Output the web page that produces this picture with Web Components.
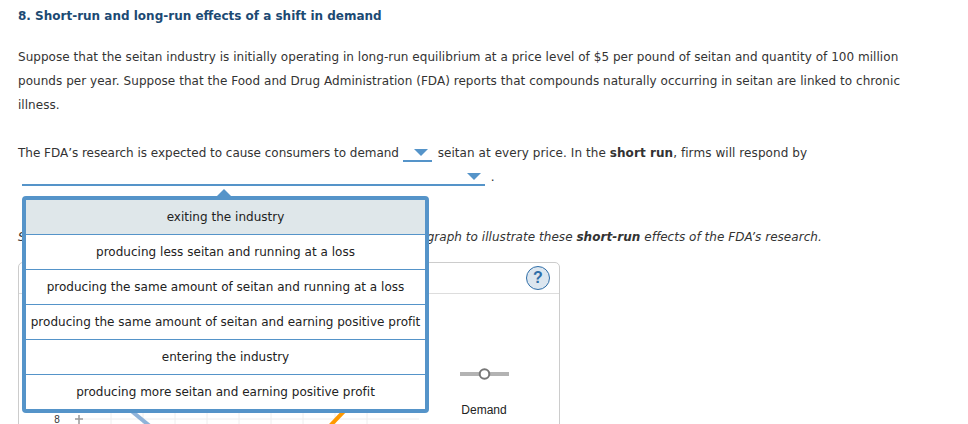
<!DOCTYPE html>
<html>
<head>
<meta charset="utf-8">
<style>
html, body { margin: 0; height: 424px; overflow: hidden; background: #fff; }
body { font: 12px "DejaVu Sans", Verdana, sans-serif; color: #333; }
.gap { display: inline-block; width: 401px; }
.tight { letter-spacing: -.02px; }
.loose { letter-spacing: .07px; }
</style>
</head>
<body>
<question-page>
  <q-heading>8. Short-run and long-run effects of a shift in demand</q-heading>
  <q-para>Suppose that the seitan industry is initially operating in long-run equilibrium at a price level of $5 per pound of seitan and quantity of 100 million pounds per year. Suppose that the Food and Drug Administration (FDA) reports that compounds naturally occurring in seitan are linked to chronic illness.</q-para>
  <q-para class="second"><span class="tight">The FDA’s research is expected to cause consumers to demand </span><q-drop style="--w:29px"></q-drop><span class="loose"> seitan at every price. In the <b>short run</b>, firms will respond by</span><br><q-drop style="--w:463px" class="long"></q-drop> .</q-para>
  <q-para class="third"><i>S<span class="gap"></span>graph to illustrate these <b>short-run</b> effects of the FDA’s research.</i></q-para>
  <graph-card></graph-card>
  <drop-menu>
    <menu-row active>exiting the industry</menu-row>
    <menu-row>producing less seitan and running at a loss</menu-row>
    <menu-row>producing the same amount of seitan and running at a loss</menu-row>
    <menu-row>producing the same amount of seitan and earning positive profit</menu-row>
    <menu-row>entering the industry</menu-row>
    <menu-row>producing more seitan and earning positive profit</menu-row>
  </drop-menu>
</question-page>

<script>
class QuestionPage extends HTMLElement {
    constructor() {
        super()
        this.attachShadow({ mode: 'open' })
        this.shadowRoot.innerHTML = `
        <style>
            :host { display: block; position: relative; height: 424px; padding: 8px 0 0 18px; box-sizing: border-box; overflow: hidden; }
        </style>
        <slot></slot>`
    }
}

class QHeading extends HTMLElement {
    constructor() {
        super()
        this.attachShadow({ mode: 'open' })
        this.shadowRoot.innerHTML = `
        <style>
            :host { display: block; font-weight: bold; line-height: 16px; color: #1c4a73; margin-bottom: 21px; }
        </style>
        <slot></slot>`
    }
}

class QPara extends HTMLElement {
    constructor() {
        super()
        this.attachShadow({ mode: 'open' })
        this.shadowRoot.innerHTML = `
        <style>
            :host { display: block; width: 900px; line-height: 24px; letter-spacing: .04px; margin-bottom: 24px; }
            :host(.second) { margin-bottom: 36px; }
            :host(.third) { margin-bottom: 13px; }
        </style>
        <slot></slot>`
    }
}

class QDrop extends HTMLElement {
    constructor() {
        super()
        this.attachShadow({ mode: 'open' })
        this.shadowRoot.innerHTML = `
        <style>
            :host { display: inline-block; overflow: hidden; box-sizing: border-box; width: var(--w); height: 16px; padding: 3px 4px 0 0; border-bottom: 2px solid #5594c9; vertical-align: -5px; margin: 0 2px 0 0; }
            :host(.long) { margin-left: 4px; }
            svg { display: block; margin-left: auto; }
        </style>
        <svg width="14" height="7" viewBox="0 0 14 7"><path d="M0 0H14L7 7Z" fill="#5594c9"/></svg>`
    }
}

class DropMenu extends HTMLElement {
    constructor() {
        super()
        this.attachShadow({ mode: 'open' })
        this.shadowRoot.innerHTML = `
        <style>
            :host { display: block; position: absolute; left: 22px; top: 196px; width: 407px; box-sizing: border-box; border: 4px solid #5594c9; border-radius: 4px; background: #fff; }
            .tip { position: absolute; left: 191px; top: -11px; width: 0; height: 0; border: 7.5px solid transparent; border-top: 0; border-bottom-color: #5594c9; }
        </style>
        <div class="tip"></div>
        <slot></slot>`
    }
}

class MenuRow extends HTMLElement {
    constructor() {
        super()
        this.attachShadow({ mode: 'open' })
        this.shadowRoot.innerHTML = `
        <style>
            :host { display: flex; align-items: center; justify-content: center; height: 35px; box-sizing: border-box; border-top: 1px solid #5594c9; color: #222; letter-spacing: .02px; white-space: nowrap; }
            :host(:first-child) { height: 34px; border-top: 0; }
            :host([active]) { background: #dfe7ea; }
        </style>
        <slot></slot>`
    }
}

class HelpIcon extends HTMLElement {
    constructor() {
        super()
        this.attachShadow({ mode: 'open' })
        this.shadowRoot.innerHTML = `
        <style>
            :host { display: block; width: 24px; height: 24px; box-sizing: border-box; border: 1.5px solid #2f6ea8; border-radius: 50%; background: #dce6ef; color: #2f6ea8; font: bold 16px/21px "Liberation Sans", sans-serif; text-align: center; }
        </style>
        ?`
    }
}

class GraphCard extends HTMLElement {
    constructor() {
        super()
        this.attachShadow({ mode: 'open' })
        this.shadowRoot.innerHTML = `
        <style>
            :host { display: block; width: 542px; height: 200px; box-sizing: border-box; border: 1px solid #ccc; border-radius: 5px 5px 0 0; }
            .head { display: flex; justify-content: flex-end; align-items: center; height: 31px; box-sizing: border-box; padding-right: 9px; border-bottom: 1px solid #ddd; }
            .body { display: flex; }
            .plot { width: 400px; flex: none; }
            .legend { flex: 1; display: flex; flex-direction: column; align-items: center; padding-top: 73px; margin-left: -10px; font: 12px "Liberation Sans", sans-serif; color: #222; }
            .legend span { margin-top: 22px; }
            svg { display: block; }
        </style>
        <div class="head"><help-icon></help-icon></div>
        <div class="body">
            <div class="plot">
                <svg width="400" height="140" viewBox="0 0 400 140">
                    <path d="M92 119V140M124 119V140M156 119V140M188 119V140M220 119V140M252 119V140M284 119V140M316 119V140M348 119V140" stroke="#eee"/>
                    <path d="M60 125H400" stroke="#eee"/>
                    <path d="M60 121V140M56 125H64" stroke="#999" stroke-width="1.5"/>
                    <path d="M110 115L132 133" stroke="#8fb3d9" stroke-width="4"/>
                    <path d="M330 112L309 134" stroke="#f90" stroke-width="4"/>
                    <text x="38" y="129" font-family="Liberation Sans" font-size="10" fill="#333" text-anchor="middle">8</text>
                </svg>
            </div>
            <div class="legend">
                <svg width="49" height="14" viewBox="0 0 49 14">
                    <path d="M0 7H49" stroke="#b3b3b3" stroke-width="4"/>
                    <circle cx="24.5" cy="7" r="4.8" fill="#fff" stroke="#777" stroke-width="2"/>
                </svg>
                <span>Demand</span>
            </div>
        </div>`
    }
}

customElements.define('question-page', QuestionPage)
customElements.define('q-heading', QHeading)
customElements.define('q-para', QPara)
customElements.define('q-drop', QDrop)
customElements.define('drop-menu', DropMenu)
customElements.define('menu-row', MenuRow)
customElements.define('help-icon', HelpIcon)
customElements.define('graph-card', GraphCard)
</script>
</body>
</html>
